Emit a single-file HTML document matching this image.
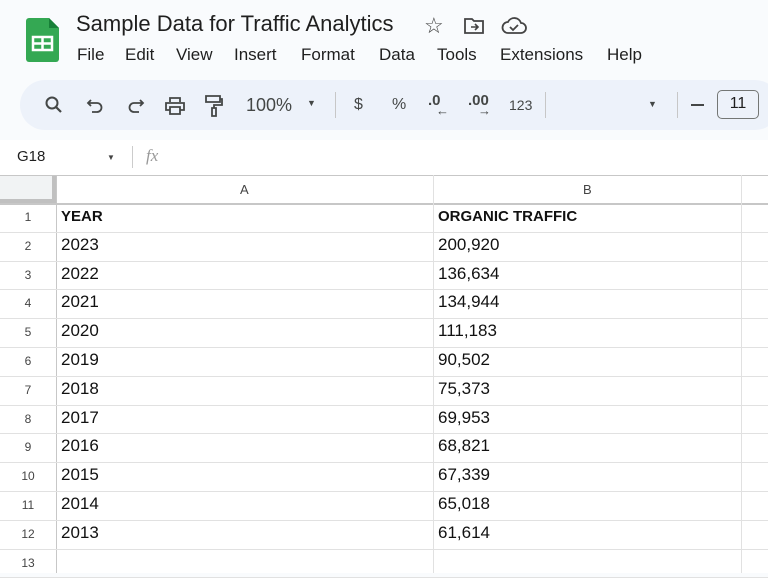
<!DOCTYPE html>
<html><head><style>
*{margin:0;padding:0;box-sizing:border-box}
body{width:768px;height:573px;overflow:hidden;background:#f9fbfd;font-family:"Liberation Sans",Arial,sans-serif;position:relative;color:#1f1f1f}
.abs{position:absolute}
.title{left:76px;top:11px;font-size:22px;color:#1f1f1f}
.menu{top:45px;font-size:17px;color:#1f1f1f}
.tb{left:20px;top:80px;width:760px;height:50px;background:#edf2fa;border-radius:25px}
.ic{top:94px;font-size:17px;color:#444746}
.sep{width:1px;height:26px;background:#c7c7c7;top:92px}
.fbar{left:0;top:140px;width:768px;height:35px;background:#fff}
.grid{left:0;top:175px;width:768px;height:398px;background:#fff}
.cell{position:absolute;font-size:17px;color:#111;}
.rn{position:absolute;left:0;width:56px;text-align:center;font-size:12px;color:#444}
.hl{position:absolute;left:0;width:768px;height:1px;background:#e1e1e1}
.vl{position:absolute;width:1px;background:#e1e1e1}
</style></head><body>
<svg class="abs" style="left:26px;top:18px" width="33" height="44" viewBox="0 0 33 44"><path d="M3 0h20l10 10v31a3 3 0 0 1-3 3H3a3 3 0 0 1-3-3V3a3 3 0 0 1 3-3z" fill="#34a853"/><path d="M23 0v10h10z" fill="#188038"/><rect x="7" y="19" width="19" height="13" fill="none" stroke="#fff" stroke-width="2.5"/><path d="M7 25.5h19M16.5 19v13" stroke="#fff" stroke-width="2.5"/></svg>
<div class="abs title">Sample Data for Traffic Analytics</div>
<div class="abs" style="left:424px;top:13px;font-size:22px;color:#444">☆</div>
<svg class="abs" style="left:463px;top:17px" width="22" height="18" viewBox="0 0 22 18"><path d="M2 2h7l2 2h9v12H2z" fill="none" stroke="#444" stroke-width="1.8"/><path d="M8 10h7M12 7l3 3-3 3" fill="none" stroke="#444" stroke-width="1.6"/></svg>
<svg class="abs" style="left:501px;top:16px" width="26" height="20" viewBox="0 0 26 20"><path d="M7 17h13a5 5 0 0 0 0-10 7 7 0 0 0-13-1 5.5 5.5 0 0 0 0 11z" fill="none" stroke="#444" stroke-width="1.8"/><path d="M9 11l3 3 5-5" fill="none" stroke="#444" stroke-width="1.8"/></svg>
<div class="abs menu" style="left:77px">File</div>
<div class="abs menu" style="left:125px">Edit</div>
<div class="abs menu" style="left:176px">View</div>
<div class="abs menu" style="left:234px">Insert</div>
<div class="abs menu" style="left:301px">Format</div>
<div class="abs menu" style="left:379px">Data</div>
<div class="abs menu" style="left:437px">Tools</div>
<div class="abs menu" style="left:500px">Extensions</div>
<div class="abs menu" style="left:607px">Help</div>
<div class="abs tb"></div>
<svg class="abs" style="left:44px;top:95px" width="20" height="20" viewBox="0 0 20 20"><circle cx="8" cy="8" r="5.5" fill="none" stroke="#444746" stroke-width="2"/><path d="M12 12l5 5" stroke="#444746" stroke-width="2.2"/></svg>
<svg class="abs" style="left:86px;top:97px" width="20" height="18" viewBox="0 0 20 18"><path d="M5 3L2 6l3 3M2 6h9a4.5 4.5 0 0 1 0 9H6" fill="none" stroke="#444746" stroke-width="1.8"/></svg>
<svg class="abs" style="left:125px;top:97px" width="20" height="18" viewBox="0 0 20 18"><path d="M15 3l3 3-3 3M18 6H9a4.5 4.5 0 0 0 0 9h5" fill="none" stroke="#444746" stroke-width="1.8"/></svg>
<svg class="abs" style="left:164px;top:95px" width="22" height="22" viewBox="0 0 22 22"><path d="M6 7V3h10v4M6 15H2V8h18v7h-4M6 12h10v7H6z" fill="none" stroke="#444746" stroke-width="1.8"/></svg>
<svg class="abs" style="left:204px;top:94px" width="20" height="24" viewBox="0 0 20 24"><path d="M2 2h14v6H2zM16 5h2v6h-8v3M8 14h4v8H8z" fill="none" stroke="#444746" stroke-width="1.8"/></svg>
<div class="abs ic" style="left:246px;top:95px;font-size:18px">100%</div>
<div class="abs ic" style="left:307px;top:98px;font-size:9px">▼</div>
<div class="abs sep" style="left:335px"></div>
<div class="abs ic" style="left:354px;top:96px;font-size:16px">$</div>
<div class="abs ic" style="left:392px;top:96px;font-size:16px">%</div>
<div class="abs ic" style="left:428px;top:92px;font-size:15px;font-weight:bold">.0</div>
<div class="abs ic" style="left:436px;top:103px;font-size:13px">←</div>
<div class="abs ic" style="left:468px;top:92px;font-size:15px;font-weight:bold">.00</div>
<div class="abs ic" style="left:478px;top:103px;font-size:13px">→</div>
<div class="abs ic" style="left:509px;top:97px;font-size:14px">123</div>
<div class="abs sep" style="left:545px"></div>
<div class="abs ic" style="left:648px;top:99px;font-size:9px">▼</div>
<div class="abs sep" style="left:677px"></div>
<div class="abs" style="left:691px;top:104px;width:13px;height:2px;background:#444746"></div>
<div class="abs" style="left:717px;top:90px;width:42px;height:29px;border:1.5px solid #747775;border-radius:5px;font-size:16px;text-align:center;line-height:26px;color:#1f1f1f">11</div>
<div class="abs fbar"></div>
<div class="abs" style="left:17px;top:148px;font-size:15px">G18</div>
<div class="abs" style="left:107px;top:153px;font-size:8px;color:#444">▼</div>
<div class="abs" style="left:132px;top:146px;width:1px;height:22px;background:#ccc"></div>
<div class="abs" style="left:146px;top:146px;font-size:17px;color:#999;font-style:italic;font-family:'Liberation Serif',serif">fx</div>
<div class="abs grid">
<div style="position:absolute;left:0;top:0;width:56px;height:28px;background:#f1f3f4;border-right:4px solid #c0c0c0;border-bottom:4px solid #c0c0c0"></div>
<div class="hl" style="top:0;background:#c7c7c7"></div>
<div class="hl" style="top:28px;height:2px;background:#c7c7c7"></div>
<div class="vl" style="left:56px;top:0;height:398px;background:#c7c7c7"></div>
<div class="vl" style="left:433px;top:0;height:398px"></div>
<div class="vl" style="left:741px;top:0;height:398px"></div>
<div class="cell" style="left:240px;top:7px;font-size:13px;color:#444">A</div>
<div class="cell" style="left:583px;top:7px;font-size:13px;color:#444">B</div>
</div>
<div id="rows"></div>
<script>
var d=[["YEAR","ORGANIC TRAFFIC"],["2023","200,920"],["2022","136,634"],["2021","134,944"],["2020","111,183"],["2019","90,502"],["2018","75,373"],["2017","69,953"],["2016","68,821"],["2015","67,339"],["2014","65,018"],["2013","61,614"],["",""]];
var h="";for(var i=0;i<13;i++){var t=203+i*28.8;var b=t+28.8;
h+='<div class="hl" style="top:'+Math.round(b)+'px;left:0"></div>';
h+='<div class="rn" style="top:'+Math.round(t+7)+'px">'+(i+1)+'</div>';
var s=i==0?'font-weight:bold;font-size:15px;top:'+Math.round(t+5)+'px':'top:'+Math.round(t+3)+'px';
h+='<div class="cell" style="left:61px;'+s+'">'+d[i][0]+'</div><div class="cell" style="left:438px;'+s+'">'+d[i][1]+'</div>';}
document.getElementById('rows').innerHTML=h;
</script>
</body></html>
